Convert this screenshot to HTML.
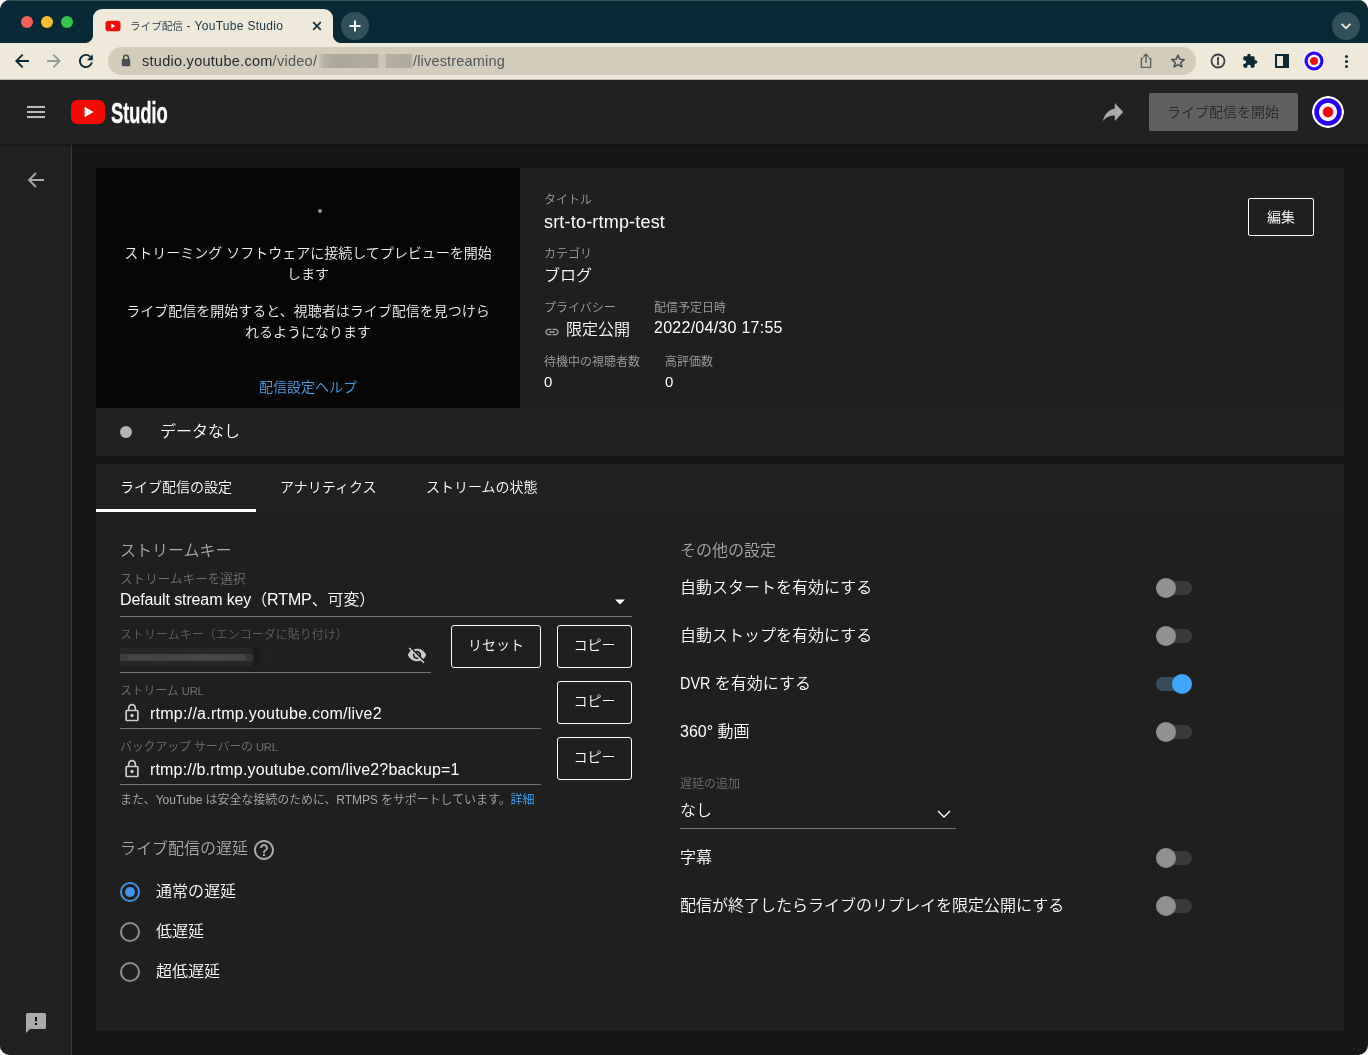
<!DOCTYPE html>
<html lang="ja">
<head>
<meta charset="utf-8">
<title>ライブ配信 - YouTube Studio</title>
<style>
*{box-sizing:border-box;margin:0;padding:0}
html,body{width:1368px;height:1055px;overflow:hidden;background:#fff}
body{font-family:"Liberation Sans","Noto Sans CJK JP",sans-serif;font-weight:350;color:#fff;-webkit-font-smoothing:antialiased}
.win{will-change:transform;position:absolute;left:0;top:0;width:1368px;height:1055px;border-radius:10px;overflow:hidden;background:#161616}
.abs{position:absolute}
.t{position:absolute;white-space:nowrap;line-height:1}
/* chrome */
.titlebar{position:absolute;left:0;top:0;width:1368px;height:43px;background:#082a37}
.tl{position:absolute;top:16px;width:12px;height:12px;border-radius:50%}
.tab{position:absolute;left:93px;top:9px;width:240px;height:34px;background:#efe9d9;border-radius:9px 9px 0 0}
.tab:before,.tab:after{content:"";position:absolute;bottom:0;width:8px;height:8px;background:radial-gradient(circle at 0 0,rgba(0,0,0,0) 7.5px,#efe9d9 8.5px)}
.tab:before{left:-8px}
.tab:after{right:-8px;background:radial-gradient(circle at 100% 0,rgba(0,0,0,0) 7.5px,#efe9d9 8.5px)}
.toolbar{position:absolute;left:0;top:43px;width:1368px;height:36px;background:#efe9d9}
.tbline{position:absolute;left:0;top:79px;width:1368px;height:1px;background:#b9b5a9}
.omni{position:absolute;left:108px;top:47px;width:1088px;height:28px;border-radius:14px;background:#d3ccba}
/* app */
.hdr{position:absolute;left:0;top:80px;width:1368px;height:64px;background:#212121}
.side{position:absolute;left:0;top:144px;width:72px;height:911px;background:#212121;border-right:1px solid #3a3a3a}
.card{position:absolute;background:#202020}
.lbl{color:#a0a0a0;font-size:12px}
.pv{font-size:14px;text-align:center;color:#f1f1f1}
.val{color:#fff;font-size:15px}
.dim{color:#717171}
.dim2{color:#606060}
.ul{height:1px;background:#767676}
.btn{position:absolute;border:1px solid #fff;border-radius:3px;color:#fff;font-size:14px;text-align:center}
.sw{position:absolute;width:36px;height:14px}
.sw i{position:absolute;left:0;top:0;width:36px;height:14px;border-radius:7px;background:#3a3a3a}
.sw b{position:absolute;left:0;top:-3px;width:20px;height:20px;border-radius:50%;background:#909090}
.sw.on b{left:16px;background:#3ea6ff}
.sw.on i{background:#3a4c5c}
</style>
</head>
<body>
<div class="win">
<!-- CHROME -->
<div class="titlebar"></div>
<div class="abs" style="left:0;top:0;width:1368px;height:1px;background:#3f5661"></div>
<div class="tl" style="left:21px;background:#f6605a"></div>
<div class="tl" style="left:41px;background:#f8bc2e"></div>
<div class="tl" style="left:61px;background:#34c648"></div>
<div class="tab"></div>
<svg class="abs" style="left:105px;top:20px" width="16" height="12" viewBox="0 0 16 12"><rect x="0.5" y="0.8" width="15" height="10.4" rx="2.8" fill="#f40a0a"/><path d="M6.3 3.5 L10.3 6 L6.3 8.5Z" fill="#fff"/></svg>
<div class="t" id="tabtitle" style="left:130px;top:20px;font-size:12px;color:#16323f"><span style="font-size:10.6px;position:relative;top:-0.5px">ライブ配信</span><span style="letter-spacing:0.3px"> - YouTube Studio</span></div>
<svg class="abs" style="left:311px;top:20px" width="12" height="12" viewBox="0 0 12 12"><path d="M2.2 2.2 L9.8 9.8 M9.8 2.2 L2.2 9.8" stroke="#16323f" stroke-width="1.7" fill="none"/></svg>
<div class="abs" style="left:341px;top:12px;width:28px;height:28px;border-radius:50%;background:#30505c"></div>
<svg class="abs" style="left:348px;top:19px" width="14" height="14" viewBox="0 0 14 14"><path d="M7 1.5 V12.5 M1.5 7 H12.5" stroke="#fff" stroke-width="2" fill="none"/></svg>
<div class="abs" style="left:1332px;top:12px;width:28px;height:28px;border-radius:50%;background:#30505c"></div>
<svg class="abs" style="left:1339px;top:19px" width="14" height="14" viewBox="0 0 14 14"><path d="M2.6 4.8 L7 9.2 L11.4 4.8" stroke="#efe9d9" stroke-width="1.8" fill="none"/></svg>
<div class="toolbar"></div>
<div class="tbline"></div>
<!-- nav icons -->
<svg class="abs" style="left:13px;top:52px" width="18" height="18" viewBox="0 0 18 18"><path d="M15.9 9 H4 M9.7 2.6 L3.3 9 L9.7 15.4" stroke="#0b2a36" stroke-width="1.9" fill="none"/></svg>
<svg class="abs" style="left:45px;top:52px" width="18" height="18" viewBox="0 0 18 18"><path d="M2.1 9 H14 M8.3 2.6 L14.7 9 L8.3 15.4" stroke="#8e9b96" stroke-width="1.9" fill="none"/></svg>
<svg class="abs" style="left:77px;top:52px" width="18" height="18" viewBox="0 0 18 18"><path d="M14.9 10.4 A6.1 6.1 0 1 1 13.2 4.6" stroke="#0b2a36" stroke-width="1.9" fill="none"/><path d="M15.8 2.2 V8.2 H9.8Z" fill="#0b2a36"/></svg>
<div class="omni"></div>
<svg class="abs" style="left:121px;top:54px" width="10" height="13" viewBox="0 0 10 13"><rect x="0.8" y="5" width="8.4" height="7.2" rx="1" fill="#4a4f54"/><path d="M2.6 5.5 V3.6 A2.4 2.4 0 0 1 7.4 3.6 V5.5" stroke="#4a4f54" stroke-width="1.5" fill="none"/></svg>
<div class="t" id="url" style="left:142px;top:54px;font-size:14.5px;color:#202a2e;letter-spacing:0.27px"><span id="u1">studio.youtube.com</span><span style="color:#4d5659" id="u2">/video/</span></div>
<div class="abs" style="left:319px;top:54px;width:94px;height:14px;background:linear-gradient(90deg,#c9c3b3 0,#b4afa2 6%,#aca79b 20%,#b0ab9e 50%,#aea99c 62%,#cbc5b4 64%,#cdc7b6 70%,#b3aea1 72%,#afaa9d 97%,#c9c3b3 100%)"></div>
<div class="t" id="url2" style="left:413px;top:54px;font-size:14.5px;color:#4d5659;letter-spacing:0.18px">/livestreaming</div>
<!-- right icons -->
<svg class="abs" style="left:1138px;top:52px" width="16" height="18" viewBox="0 0 16 18"><path d="M5.2 6.4 H3.4 V15.4 H12.6 V6.4 H10.8" stroke="#5a5f62" stroke-width="1.4" fill="none"/><path d="M8 11 V2.4 M5.4 4.8 L8 2.2 L10.6 4.8" stroke="#5a5f62" stroke-width="1.4" fill="none"/></svg>
<svg class="abs" style="left:1170px;top:53px" width="16" height="16" viewBox="0 0 18 18"><path d="M9 2.3 L11 6.9 L16 7.4 L12.2 10.7 L13.3 15.6 L9 13 L4.7 15.6 L5.8 10.7 L2 7.4 L7 6.9Z" stroke="#4a5154" stroke-width="1.7" fill="none" stroke-linejoin="round"/></svg>
<svg class="abs" style="left:1209px;top:52px" width="18" height="18" viewBox="0 0 18 18"><circle cx="9" cy="9" r="6.5" stroke="#3d4447" stroke-width="1.8" fill="none"/><rect x="8" y="4.8" width="2" height="8.4" rx="1" fill="#3d4447"/><circle cx="9" cy="9" r="0.6" fill="#efe9d9"/></svg>
<svg class="abs" style="left:1242px;top:53px" width="16" height="16" viewBox="0 0 24 24"><path d="M20.5 11H19V7c0-1.1-.9-2-2-2h-4V3.500C13 2.120 11.880 1 10.500 1S8 2.120 8 3.500V5H4c-1.100 0-1.990.9-1.990 2v3.800H3.500c1.490 0 2.700 1.210 2.700 2.700s-1.210 2.700-2.700 2.700H2V20c0 1.100.9 2 2 2h3.800v-1.500c0-1.490 1.210-2.700 2.700-2.700 1.490 0 2.700 1.210 2.700 2.700V22H17c1.100 0 2-.9 2-2v-4h1.500c1.380 0 2.500-1.120 2.500-2.500S21.880 11 20.500 11z" fill="#0b2a36"/></svg>
<div class="abs" style="left:1275px;top:54px;width:14px;height:14px;border:2px solid #0b2a36;border-right-width:6px"></div>
<div class="abs" style="left:1302px;top:49px;width:24px;height:24px;border-radius:50%;background:radial-gradient(circle at 50% 50%,#f40a00 0,#f40a00 3.4px,#fff 4.6px,#fff 5.7px,#2c00ff 6.8px,#2c00ff 8.9px,#fff 10px,#fff 10.3px,rgba(255,255,255,0) 11.1px)"></div>
<div class="abs" style="left:1345px;top:55px;width:3px;height:3px;border-radius:50%;background:#0b2a36;box-shadow:0 5px 0 #0b2a36,0 10px 0 #0b2a36"></div>
<!-- APP -->
<div class="hdr"></div>
<div class="abs" style="left:27px;top:106px;width:18px;height:2px;background:#b8b8b8;box-shadow:0 5px 0 #b8b8b8,0 10px 0 #b8b8b8"></div>
<svg class="abs" style="left:71px;top:100px" width="34" height="24" viewBox="0 0 34 24"><rect x="0" y="0" width="34" height="24" rx="6" ry="7" fill="#f40a00"/><path d="M13.6 6.8 L22.6 12 L13.6 17.2Z" fill="#fff"/></svg>
<div class="t" id="studio" style="left:110.5px;top:98px;font-size:29.5px;font-weight:bold;color:#fff;transform:scaleX(0.625);transform-origin:0 50%;letter-spacing:-0.2px;-webkit-text-stroke:0.5px #fff;will-change:transform">Studio</div>
<svg class="abs" style="left:1101px;top:100px" width="24" height="24" viewBox="0 0 24 24"><path d="M13.8 8.5 V3 L22.2 12 L13.8 21 V15.4 C9 15.4 5 16.8 2 21 C3.2 15 7 9.8 13.8 8.5Z" fill="#aaa"/></svg>
<div class="abs" style="left:1149px;top:93px;width:149px;height:38px;border-radius:2px;background:#606060"></div>
<div class="t" id="golive" style="left:1167px;top:104.5px;font-size:14px;color:#282828">ライブ配信を開始</div>
<div class="abs" style="left:1312px;top:96px;width:32px;height:32px;border-radius:50%;background:radial-gradient(circle at 50% 50%,#f40a00 0,#f40a00 4.7px,#fff 5.9px,#fff 8.5px,#2c00ff 9.5px,#2c00ff 13.1px,#fff 14.3px,#fff 15.5px,rgba(255,255,255,0) 16.3px)"></div>
<div class="side"></div>
<div class="abs" style="left:0;top:144px;width:1368px;height:4px;background:linear-gradient(rgba(0,0,0,.3),rgba(0,0,0,0))"></div>
<svg class="abs" style="left:26px;top:170px" width="20" height="20" viewBox="0 0 20 20"><path d="M18 10 H3.6 M10 3 L3 10 L10 17" stroke="#aaa" stroke-width="1.8" fill="none"/></svg>
<svg class="abs" style="left:26px;top:1013px" width="20" height="20" viewBox="0 0 20 20"><path d="M0 1.6 Q0 0 1.6 0 H18.4 Q20 0 20 1.6 V14.4 Q20 16 18.4 16 H4 L0 20Z" fill="#aaa"/><rect x="9" y="4" width="2" height="4.2" fill="#0a0a0a"/><rect x="9" y="10" width="2" height="2" fill="#0a0a0a"/></svg>
<div class="card" id="c1" style="left:96px;top:168px;width:1248px;height:288px;background:linear-gradient(#1f1f1f 240px,#212121 240px)"></div>
<div class="abs" style="left:96px;top:168px;width:424px;height:240px;background:#060606"></div>
<div class="abs" style="left:317.5px;top:208.5px;width:4px;height:4px;border-radius:50%;background:#999"></div>
<div class="t pv" id="pv1" style="left:96px;width:424px;top:246px">ストリーミング ソフトウェアに接続してプレビューを開始</div>
<div class="t pv" id="pv2" style="left:96px;width:424px;top:267px">します</div>
<div class="t pv" id="pv3" style="left:96px;width:424px;top:304px">ライブ配信を開始すると、視聴者はライブ配信を見つけら</div>
<div class="t pv" id="pv4" style="left:96px;width:424px;top:325px">れるようになります</div>
<div class="t pv" id="pv5" style="left:96px;width:424px;top:380px;color:#4a9fe6">配信設定ヘルプ</div>
<div class="abs" style="left:120px;top:426px;width:12px;height:12px;border-radius:50%;background:#b4b4b4"></div>
<div class="t" id="nodata" style="left:160px;top:424px;font-size:16px;color:#fff">データなし</div>
<div class="t lbl" id="l1" style="left:544px;top:194px">タイトル</div>
<div class="t" id="v1" style="left:544px;top:213px;font-size:18px;letter-spacing:0.19px">srt-to-rtmp-test</div>
<div class="t lbl" id="l2" style="left:544px;top:248px">カテゴリ</div>
<div class="t" id="v2" style="left:544px;top:268px;font-size:16px">ブログ</div>
<div class="t lbl" id="l3" style="left:544px;top:302px">プライバシー</div>
<div class="t lbl" id="l4" style="left:654px;top:302px">配信予定日時</div>
<svg class="abs" style="left:544px;top:324px" width="16" height="16" viewBox="0 0 24 24"><path d="M3.900 12c0-1.710 1.390-3.100 3.100-3.100h4V7H7c-2.760 0-5 2.240-5 5s2.240 5 5 5h4v-1.900H7c-1.710 0-3.100-1.390-3.100-3.100zM8 13h8v-2H8v2zm9-6h-4v1.900h4c1.710 0 3.100 1.390 3.100 3.100s-1.390 3.100-3.100 3.100h-4V17h4c2.760 0 5-2.240 5-5s-2.240-5-5-5z" fill="#aaa"/></svg>
<div class="t" id="v3" style="left:566px;top:322px;font-size:16px">限定公開</div>
<div class="t" id="v4" style="left:654px;top:320px;font-size:16px;letter-spacing:0.26px">2022/04/30 17:55</div>
<div class="t lbl" id="l5" style="left:544px;top:356px">待機中の視聴者数</div>
<div class="t lbl" id="l6" style="left:665px;top:356px">高評価数</div>
<div class="t" id="v5" style="left:544px;top:374px;font-size:15px">0</div>
<div class="t" id="v6" style="left:665px;top:374px;font-size:15px">0</div>
<div class="btn" style="left:1248px;top:198px;width:66px;height:38px;border-color:#fff;border-radius:2px"></div>
<div class="t" id="edit" style="left:1267px;top:210px;font-size:14px">編集</div>
<div class="card" id="c2" style="left:96px;top:464px;width:1248px;height:567px;background:#1f1f1f"></div>
<div class="abs" style="left:96px;top:464px;width:1248px;height:48px;background:#212121"></div>
<div class="abs" style="left:96px;top:509px;width:160px;height:3px;background:#fff"></div>
<div class="t" id="tb1" style="left:120px;top:480px;font-size:14px">ライブ配信の設定</div>
<div class="t" id="tb2" style="left:280px;top:480px;font-size:14px">アナリティクス</div>
<div class="t" id="tb3" style="left:426px;top:480px;font-size:14px">ストリームの状態</div>
<!-- left column -->
<div class="t" id="h1" style="left:120px;top:542.5px;font-size:16px;color:#aaa">ストリームキー</div>
<div class="t dim" id="k1" style="left:120px;top:573px;font-size:12.6px">ストリームキーを選択</div>
<div class="t" id="k2" style="left:120px;top:591.5px;font-size:16px;letter-spacing:-0.12px">Default stream key（RTMP、可変）</div>
<svg class="abs" style="left:614px;top:599px" width="12" height="6" viewBox="0 0 12 6"><path d="M1 0.5 H11 L6 5.5Z" fill="#fff"/></svg>
<div class="abs ul" style="left:120px;top:616px;width:512px"></div>
<div class="t dim2" id="k3" style="left:120px;top:629px;font-size:12px">ストリームキー（エンコーダに貼り付け）</div>
<div class="abs" style="left:120px;top:648px;width:160px;height:18px;background:linear-gradient(90deg,#262626 0,#272727 82%,#1b1b1b 84%,#1b1b1b 87%,#222 90%,#1f1f1f 100%)"></div>
<div class="abs" style="left:120px;top:654px;width:133px;height:7px;background:linear-gradient(90deg,#3d3d3d 0,#3d3d3d 5%,#464646 6%,#424242 30%,#474747 60%,#444 94%,#383838 95%,#333 100%)"></div>
<svg class="abs" style="left:407px;top:645px" width="20" height="20" viewBox="0 0 24 24"><path d="M12 7c2.760 0 5 2.240 5 5 0 .650-.130 1.260-.360 1.830l2.920 2.920c1.510-1.260 2.700-2.890 3.430-4.750-1.730-4.390-6-7.500-11-7.500-1.400 0-2.740.250-3.980.7l2.160 2.160C10.740 7.130 11.350 7 12 7zM2 4.270l2.280 2.280.46.46C3.080 8.300 1.780 10.020 1 12c1.730 4.390 6 7.500 11 7.500 1.550 0 3.030-.3 4.380-.840l.42.420L19.730 22 21 20.730 3.270 3 2 4.270zM7.530 9.800l1.550 1.550c-.050.210-.080.430-.080.650 0 1.660 1.340 3 3 3 .220 0 .440-.030.650-.080l1.550 1.550c-.670.330-1.410.530-2.200.530-2.760 0-5-2.240-5-5 0-.790.200-1.530.530-2.200zm4.310-.780l3.150 3.150.020-.160c0-1.660-1.340-3-3-3l-.170.010z" fill="#ccc"/></svg>
<div class="abs ul" style="left:120px;top:672px;width:311px"></div>
<div class="btn" style="left:451px;top:625px;width:90px;height:43px"></div>
<div class="t" id="b1" style="left:468px;top:638px;font-size:14px">リセット</div>
<div class="btn" style="left:557px;top:625px;width:75px;height:43px"></div>
<div class="t" id="b2" style="left:573.5px;top:638px;font-size:14px">コピー</div>
<div class="t dim" id="k4" style="left:120px;top:685px;font-size:12px;letter-spacing:-0.2px">ストリーム <span style="font-size:11.2px">URL</span></div>
<svg class="abs lock" style="left:122px;top:703px" width="20" height="20" viewBox="0 0 24 24"><path d="M18 8h-1V6c0-2.760-2.240-5-5-5S7 3.240 7 6v2H6c-1.100 0-2 .9-2 2v10c0 1.100.9 2 2 2h12c1.100 0 2-.9 2-2V10c0-1.100-.9-2-2-2zM9 6c0-1.660 1.340-3 3-3s3 1.340 3 3v2H9V6zm9 14H6V10h12v10zm-6-3c1.100 0 2-.9 2-2s-.9-2-2-2-2 .9-2 2 .9 2 2 2z" fill="#ccc"/></svg>
<div class="t" id="k5" style="left:150px;top:706px;font-size:16px;letter-spacing:0.25px">rtmp://a.rtmp.youtube.com/live2</div>
<div class="abs ul" style="left:120px;top:728px;width:421px"></div>
<div class="btn" style="left:557px;top:681px;width:75px;height:43px"></div>
<div class="t" id="b3" style="left:573.5px;top:694px;font-size:14px">コピー</div>
<div class="t dim" id="k6" style="left:120px;top:741px;font-size:12px;letter-spacing:-0.2px">バックアップ サーバーの <span style="font-size:11.2px">URL</span></div>
<svg class="abs lock" style="left:122px;top:759px" width="20" height="20" viewBox="0 0 24 24"><path d="M18 8h-1V6c0-2.760-2.240-5-5-5S7 3.240 7 6v2H6c-1.100 0-2 .9-2 2v10c0 1.100.9 2 2 2h12c1.100 0 2-.9 2-2V10c0-1.100-.9-2-2-2zM9 6c0-1.660 1.340-3 3-3s3 1.340 3 3v2H9V6zm9 14H6V10h12v10zm-6-3c1.100 0 2-.9 2-2s-.9-2-2-2-2 .9-2 2 .9 2 2 2z" fill="#ccc"/></svg>
<div class="t" id="k7" style="left:150px;top:762px;font-size:16px;letter-spacing:0.17px">rtmp://b.rtmp.youtube.com/live2?backup=1</div>
<div class="abs ul" style="left:120px;top:784px;width:421px"></div>
<div class="btn" style="left:557px;top:737px;width:75px;height:43px"></div>
<div class="t" id="b4" style="left:573.5px;top:750px;font-size:14px">コピー</div>
<div class="t" id="note" style="left:120px;top:794px;font-size:12px;color:#aaa;letter-spacing:-0.08px">また、YouTube は安全な接続のために、RTMPS をサポートしています。<span style="color:#3ea6ff">詳細</span></div>
<div class="t" id="h2" style="left:120px;top:840.5px;font-size:16px;color:#aaa">ライブ配信の遅延</div>
<svg class="abs" style="left:252px;top:838px" width="24" height="24" viewBox="0 0 24 24"><path d="M11 18h2v-2h-2v2zm1-16C6.480 2 2 6.480 2 12s4.480 10 10 10 10-4.480 10-10S17.520 2 12 2zm0 18c-4.410 0-8-3.590-8-8s3.590-8 8-8 8 3.590 8 8-3.590 8-8 8zm0-14c-2.210 0-4 1.790-4 4h2c0-1.100.9-2 2-2s2 .9 2 2c0 2-3 1.750-3 5h2c0-2.250 3-2.500 3-5 0-2.210-1.790-4-4-4z" fill="#aaa"/></svg>
<div class="abs" style="left:120px;top:881.5px;width:20px;height:20px;border-radius:50%;border:2px solid #4393e6"></div>
<div class="abs" style="left:125px;top:886.5px;width:10px;height:10px;border-radius:50%;background:#4393e6"></div>
<div class="t" id="r1" style="left:156px;top:884px;font-size:16px">通常の遅延</div>
<div class="abs" style="left:120px;top:921.5px;width:20px;height:20px;border-radius:50%;border:2px solid #8e8e8e"></div>
<div class="t" id="r2" style="left:156px;top:924px;font-size:16px">低遅延</div>
<div class="abs" style="left:120px;top:961.5px;width:20px;height:20px;border-radius:50%;border:2px solid #8e8e8e"></div>
<div class="t" id="r3" style="left:156px;top:964px;font-size:16px">超低遅延</div>
<!-- right column -->
<div class="t" id="h3" style="left:680px;top:542.5px;font-size:16px;color:#aaa">その他の設定</div>
<div class="t" id="s1" style="left:680px;top:580.4px;font-size:16px">自動スタートを有効にする</div>
<div class="sw" style="left:1156px;top:581px"><i></i><b></b></div>
<div class="t" id="s2" style="left:680px;top:628.4px;font-size:16px">自動ストップを有効にする</div>
<div class="sw" style="left:1156px;top:629px"><i></i><b></b></div>
<div class="t" id="s3" style="left:680px;top:676.4px;font-size:16px"><span style="display:inline-block;transform:scaleX(0.9);transform-origin:0 50%;margin-right:-3.4px">DVR</span> を有効にする</div>
<div class="sw on" style="left:1156px;top:677px"><i></i><b></b></div>
<div class="t" id="s4" style="left:680px;top:724.4px;font-size:16px">360° 動画</div>
<div class="sw" style="left:1156px;top:725px"><i></i><b></b></div>
<div class="t dim" id="s5" style="left:680px;top:778px;font-size:12px">遅延の追加</div>
<div class="t" id="s6" style="left:680px;top:803px;font-size:16px">なし</div>
<svg class="abs" style="left:936px;top:809px" width="16" height="10" viewBox="0 0 16 10"><path d="M2 2 L8 8 L14 2" stroke="#fff" stroke-width="1.3" fill="none"/></svg>
<div class="abs ul" style="left:680px;top:828px;width:276px"></div>
<div class="t" id="s7" style="left:680px;top:850.4px;font-size:16px">字幕</div>
<div class="sw" style="left:1156px;top:851px"><i></i><b></b></div>
<div class="t" id="s8" style="left:680px;top:898.4px;font-size:16px">配信が終了したらライブのリプレイを限定公開にする</div>
<div class="sw" style="left:1156px;top:899px"><i></i><b></b></div>
<!-- END APP -->
</div>
</body>
</html>
